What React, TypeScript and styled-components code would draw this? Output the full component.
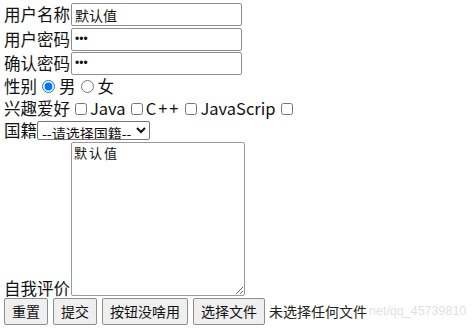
import React from "react";
import styled, { createGlobalStyle } from "styled-components";

const Global = createGlobalStyle`
  html, body { margin: 0; padding: 0; background: #fff; }
  body {
    font-family: "Noto Sans CJK SC", "Noto Sans", sans-serif;
    color: #111;
  }
`;

const Form = styled.form`
  position: relative;
  display: flex;
  flex-direction: column;
  padding: 2px 0 0 4px;
  width: 474px;
  height: 328px;
  box-sizing: border-box;
  overflow: hidden;
`;

const Row = styled.div<{ $h: number; $align?: string }>`
  display: flex;
  align-items: ${(p) => p.$align || "center"};
  height: ${(p) => p.$h}px;
  font-size: 16.5px;
  line-height: 1;
  white-space: nowrap;
`;

const Label = styled.span<{ $ls?: number }>`
  letter-spacing: ${(p) => p.$ls || 0}px;
`;

const TextInput = styled.input`
  box-sizing: border-box;
  width: 171px;
  height: 23px;
  margin: 0 0 0 1px;
  padding: 0 3px;
  border: 1px solid #8f8f8f;
  border-radius: 2px;
  font-family: "Noto Sans CJK SC", sans-serif;
  font-size: 14px;
  color: #111;
  outline: none;
  &[type="password"] {
    font-family: "Liberation Sans", sans-serif;
    font-size: 12px;
    letter-spacing: 0;
  }
`;

const Radio = styled.input`
  width: 13px;
  height: 13px;
  margin: 1px 4px 0 5px;
  accent-color: #0075ff;
`;

const Check = styled.input`
  width: 12px;
  height: 12px;
  margin: 2px 3px 0 5px;
`;

const Select = styled.select`
  box-sizing: border-box;
  width: 113px;
  height: 19px;
  margin-left: 0;
  padding: 0;
  border: 1px solid #767676;
  border-radius: 2px;
  background: #fff;
  font-family: "Noto Sans CJK SC", sans-serif;
  font-size: 14px;
  line-height: 1;
  color: #111;
`;

const Area = styled.textarea`
  box-sizing: border-box;
  width: 174px;
  height: 154px;
  margin: 0 0 0 1px;
  padding: 2px 2px;
  border: 1px solid #9a9a9a;
  border-radius: 2px;
  font-family: "Noto Sans CJK SC", sans-serif;
  font-size: 13px;
  letter-spacing: 2px;
  line-height: 1.2;
  color: #111;
  resize: both;
  outline: none;
`;

const Btn = styled.button`
  box-sizing: border-box;
  height: 27px;
  padding: 0 7px;
  margin-right: 5px;
  border: 1px solid #8f8f8f;
  border-radius: 2px;
  background: #efefef;
  font-family: "Noto Sans CJK SC", sans-serif;
  font-size: 14px;
  color: #111;
`;

const FileNote = styled.span`
  font-size: 14px;
  color: #222;
  margin-left: -1px;
`;

const Watermark = styled.span`
  position: absolute;
  left: 369px;
  top: 304px;
  font-family: "Liberation Sans", sans-serif;
  font-size: 12.5px;
  color: rgba(160, 160, 160, 0.35);
`;

export default function App() {
  return (
    <>
      <Global />
      <Form onSubmit={(e) => e.preventDefault()}>
        <Row $h={25}>
          <Label>用户名称</Label>
          <TextInput defaultValue="默认值" />
        </Row>
        <Row $h={24}>
          <Label>用户密码</Label>
          <TextInput type="password" defaultValue="123" />
        </Row>
        <Row $h={24}>
          <Label>确认密码</Label>
          <TextInput type="password" defaultValue="123" />
        </Row>
        <Row $h={22}>
          <Label>性别</Label>
          <Radio type="radio" name="sex" defaultChecked />
          <Label>男</Label>
          <Radio type="radio" name="sex" />
          <Label>女</Label>
        </Row>
        <Row $h={22}>
          <Label>兴趣爱好</Label>
          <Check type="checkbox" />
          <Label>Java</Label>
          <Check type="checkbox" />
          <Label $ls={2}>C++</Label>
          <Check type="checkbox" />
          <Label>JavaScrip</Label>
          <Check type="checkbox" />
        </Row>
        <Row $h={22}>
          <Label>国籍</Label>
          <Select defaultValue="">
            <option value="">--请选择国籍--</option>
          </Select>
        </Row>
        <Row $h={155} $align="flex-end">
          <Label>自我评价</Label>
          <Area defaultValue="默认值" />
        </Row>
        <Row $h={30}>
          <Btn type="reset">重置</Btn>
          <Btn type="submit">提交</Btn>
          <Btn type="button">按钮没啥用</Btn>
          <Btn type="button">选择文件</Btn>
          <FileNote>未选择任何文件</FileNote>
        </Row>
        <Watermark>net/qq_45739810</Watermark>
      </Form>
    </>
  );
}
